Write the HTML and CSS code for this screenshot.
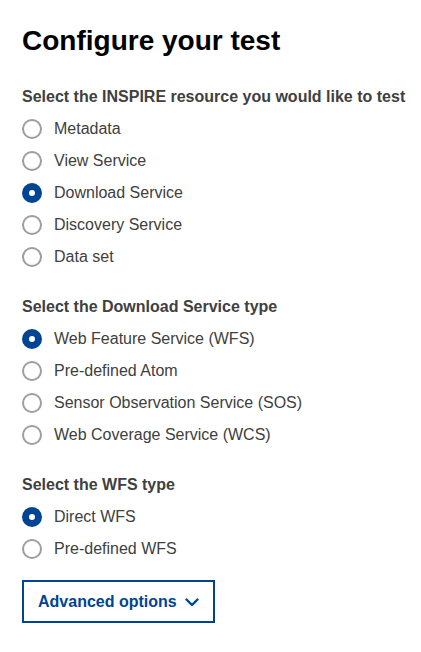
FILE: index.html
```html
<!DOCTYPE html>
<html lang="en">
<head>
<meta charset="utf-8">
<title>Configure your test</title>
<link rel="stylesheet" href="styles.css">
</head>
<body>
<main class="page">
  <h1 class="title">Configure your test</h1>

  <section class="group">
    <div class="legend">Select the INSPIRE resource you would like to test</div>
    <label class="option"><span class="radio"></span><span class="label">Metadata</span></label>
    <label class="option"><span class="radio"></span><span class="label">View Service</span></label>
    <label class="option"><span class="radio checked"></span><span class="label">Download Service</span></label>
    <label class="option"><span class="radio"></span><span class="label">Discovery Service</span></label>
    <label class="option"><span class="radio"></span><span class="label">Data set</span></label>
  </section>

  <section class="group">
    <div class="legend">Select the Download Service type</div>
    <label class="option"><span class="radio checked"></span><span class="label">Web Feature Service (WFS)</span></label>
    <label class="option"><span class="radio"></span><span class="label">Pre-defined Atom</span></label>
    <label class="option"><span class="radio"></span><span class="label">Sensor Observation Service (SOS)</span></label>
    <label class="option"><span class="radio"></span><span class="label">Web Coverage Service (WCS)</span></label>
  </section>

  <section class="group">
    <div class="legend">Select the WFS type</div>
    <label class="option"><span class="radio checked"></span><span class="label">Direct WFS</span></label>
    <label class="option"><span class="radio"></span><span class="label">Pre-defined WFS</span></label>
  </section>

  <button class="advanced" type="button">
    <span>Advanced options</span>
    <svg class="chev" width="14" height="14" viewBox="0 0 14 14" aria-hidden="true"><path d="M1.5 4.5 7 10l5.5-5.5" fill="none" stroke="#004494" stroke-width="2.4" stroke-linecap="round" stroke-linejoin="round"/></svg>
  </button>
</main>
</body>
</html>
```

FILE: styles.css
```css
html, body {
  margin: 0;
  padding: 0;
  background: #fff;
}
body {
  font-family: "Liberation Sans", Arial, sans-serif;
  color: #404040;
}
.page {
  padding: 25px 8px 0 22px;
  display: flex;
  flex-direction: column;
  align-items: flex-start;
}
.title {
  margin: 0;
  font-size: 28px;
  line-height: 32px;
  font-weight: bold;
  color: #000;
}
.group {
  display: flex;
  flex-direction: column;
  margin-top: 22px;
}
.group:first-of-type {
  margin-top: 28px;
}
.legend {
  font-size: 16px;
  line-height: 24px;
  font-weight: bold;
  color: #404040;
  white-space: nowrap;
  padding-bottom: 4px;
}
.option {
  display: flex;
  align-items: center;
  height: 32px;
  gap: 12px;
  font-size: 16px;
  line-height: 32px;
}
.radio {
  box-sizing: border-box;
  width: 20px;
  height: 20px;
  border-radius: 50%;
  border: 2px solid #9e9e9e;
  background: #fff;
  flex: none;
}
.radio.checked {
  border: 7px solid #004494;
}
.advanced {
  margin-top: 15px;
  box-sizing: border-box;
  height: 43px;
  display: flex;
  align-items: center;
  gap: 8px;
  padding: 0 14px 0 14px;
  border: 2px solid #004494;
  background: #fff;
  color: #004494;
  font-family: "Liberation Sans", Arial, sans-serif;
  font-size: 16px;
  font-weight: bold;
  line-height: 23px;
  cursor: pointer;
}
.chev {
  display: block;
}
```
